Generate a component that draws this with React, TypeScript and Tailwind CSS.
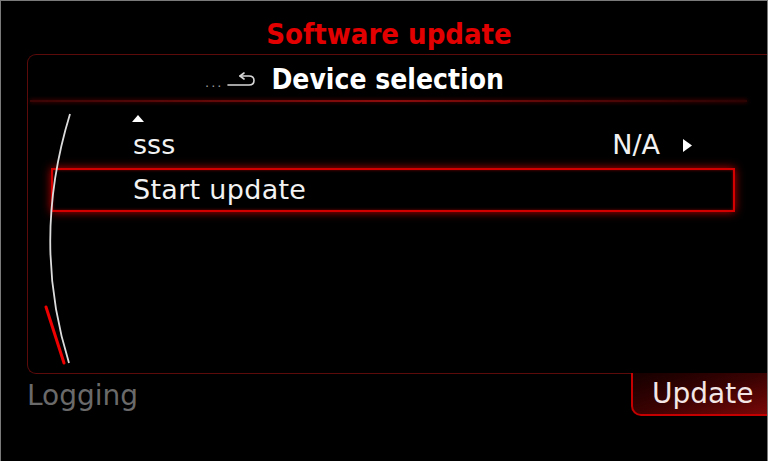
import React from "react";

const sans = { fontFamily: '"DejaVu Sans", "Liberation Sans", sans-serif' };
const cond = { fontFamily: '"DejaVu Sans Condensed", "Roboto Condensed", Roboto, sans-serif', fontStretch: "condensed" as const };

function BackArrow() {
  return (
    <svg width="30" height="16" viewBox="0 0 30 16" fill="none" stroke="#d8d8d8" strokeWidth="1.6" strokeLinecap="round" strokeLinejoin="round">
      <path d="M1 13 H22 Q27 13 27 8.5 Q27 4 22 4 H13" />
      <path d="M17 1 L13 4 L17 7" />
    </svg>
  );
}

export default function App() {
  return (
    <div className="relative w-[768px] h-[461px] bg-black border-l border-t border-r border-[#7a7a7a] overflow-hidden flex flex-col">
      {/* title */}
      <div className="h-[53px] flex items-start justify-center pt-[17px] pl-[10px]">
        <span style={cond} className="text-[29px] leading-[32px] font-bold text-[#e30000]">Software update</span>
      </div>

      {/* main panel */}
      <div className="ml-[26px] h-[320px] border-l border-t border-b border-[#5c0a0a] rounded-tl-[9px] rounded-bl-[9px] flex flex-col">
        <div className="h-[45px] flex items-center pl-[177px] pt-[4px]">
          <span className="text-[#9a9a9a] text-[13px] tracking-[2px] mt-[6px]" style={sans}>...</span>
          <span className="ml-[4px]"><BackArrow /></span>
          <span style={cond} className="ml-[14px] text-[28px] font-bold text-white">Device selection</span>
        </div>
        <div className="h-[2px] mx-[2px] mr-[20px] bg-gradient-to-r from-[#3a0505] via-[#8c0c0c] to-[#2a0303] shadow-[0_0_4px_#6a0000]" />

        <div className="flex flex-col pl-[23px] pr-[32px]">
          <div className="h-[20px] pl-[81px] flex items-end">
            <svg width="12" height="7" viewBox="0 0 12 7"><path d="M0 7 L6 0 L12 7 Z" fill="#fff" /></svg>
          </div>
          <div className="h-[46px] flex items-center pl-[82px] pr-[43px]" style={sans}>
            <span className="text-[27px] text-[#f2f2f2]">sss</span>
            <span className="ml-auto text-[27px] text-[#f2f2f2]">N/A</span>
            <svg className="ml-[23px]" width="9" height="13" viewBox="0 0 9 13"><path d="M0 0 L9 6.5 L0 13 Z" fill="#fff" /></svg>
          </div>
          <div className="h-[44px] border-2 border-[#d40000] shadow-[0_0_9px_#c00000,inset_0_0_3px_#800000] flex items-center pl-[80px]" style={sans}>
            <span className="text-[27px] tracking-[0.3px] text-[#f2f2f2]">Start update</span>
          </div>
        </div>
      </div>

      {/* bottom tabs */}
      <div className="flex items-start">
        <span style={sans} className="pl-[26px] pt-[1px] text-[28px] text-[#6a6a6a]">Logging</span>
        <div className="ml-auto -mt-px w-[136px] h-[43px] border-l-2 border-b-2 border-[#c40000] rounded-bl-[10px] bg-gradient-to-br from-[#160000] via-[#3a0202] to-[#7a0808] flex items-center pl-[19px]">
          <span style={sans} className="text-[28px] text-[#f3e6e6]">Update</span>
        </div>
      </div>

      {/* scroll indicator */}
      <svg className="absolute left-0 top-0" width="100" height="400" viewBox="0 0 100 400" fill="none">
        <path d="M69 113 Q30 240 68 362" stroke="#dcdcdc" strokeWidth="1.8" />
        <path d="M45 306 L63 362" stroke="#ee0000" strokeWidth="3" strokeLinecap="round" />
      </svg>
    </div>
  );
}
